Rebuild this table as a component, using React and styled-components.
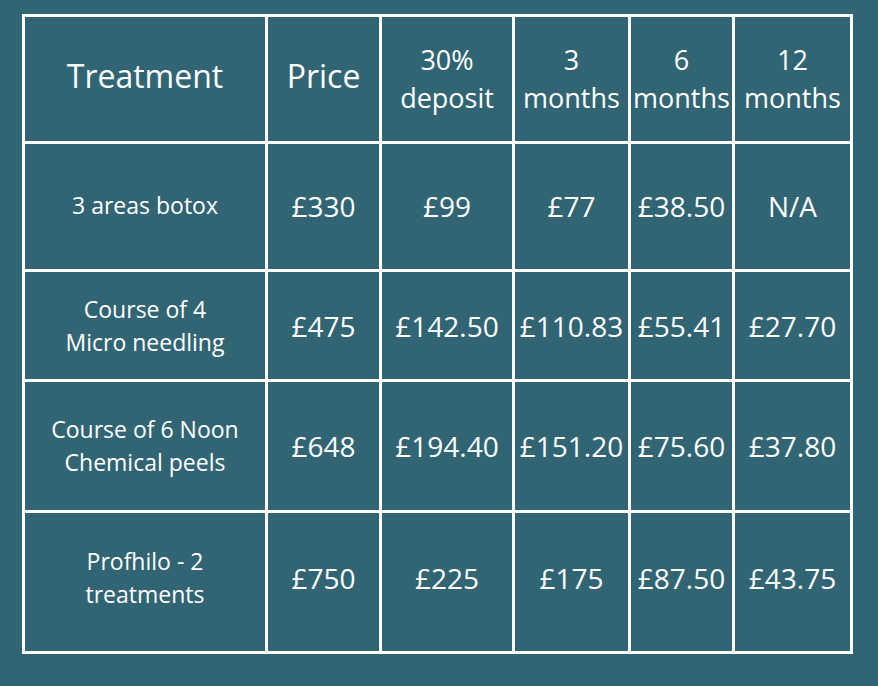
import React from 'react';
import styled, { createGlobalStyle } from 'styled-components';

const GlobalStyle = createGlobalStyle`
  html, body {
    margin: 0;
    padding: 0;
    background: #316574;
  }
  body {
    font-family: "Open Sans", "Liberation Sans", sans-serif;
    color: #ffffff;
  }
`;

const Page = styled.div`
  width: 878px;
  height: 686px;
  padding: 14px 0 0 22px;
  box-sizing: border-box;
  background: #316574;
`;

const Grid = styled.div`
  display: grid;
  grid-template-columns: 240px 111px 130px 113px 101px 115px;
  grid-template-rows: 124px 125px 107px 128px 138px;
  gap: 3px;
  padding: 3px;
  width: max-content;
  background: #ffffff;
`;

const sizes = {
  title: { font: '32px', line: '40px' },
  head: { font: '27px', line: '38px' },
  name: { font: '23px', line: '33px' },
  value: { font: '28px', line: '34px' },
};

// lift = how far the text sits above the cell's centre
const Cell = styled.div`
  background: #316574;
  display: flex;
  align-items: center;
  justify-content: center;
  text-align: center;
  white-space: pre-line;
  box-sizing: border-box;
  padding-bottom: ${p => p.lift * 2}px;
  font-size: ${p => sizes[p.kind].font};
  line-height: ${p => sizes[p.kind].line};
  font-weight: 400;
`;

const head = [
  ['Treatment', 'title'],
  ['Price', 'title'],
  ['30%\ndeposit', 'head'],
  ['3\nmonths', 'head'],
  ['6\nmonths', 'head'],
  ['12\nmonths', 'head'],
];

const rows = [
  { lift: 1, cells: ['3 areas botox', '£330', '£99', '£77', '£38.50', 'N/A'] },
  { lift: 0, cells: ['Course of 4\nMicro needling', '£475', '£142.50', '£110.83', '£55.41', '£27.70'] },
  { lift: 0, cells: ['Course of 6 Noon\nChemical peels', '£648', '£194.40', '£151.20', '£75.60', '£37.80'] },
  { lift: 4, cells: ['Profhilo - 2\ntreatments', '£750', '£225', '£175', '£87.50', '£43.75'] },
];

export default function App() {
  return (
    <>
      <GlobalStyle />
      <Page>
        <Grid>
          {head.map(([text, kind]) => (
            <Cell key={text} kind={kind} lift={kind === 'title' ? 3 : 0}>{text}</Cell>
          ))}
          {rows.map(r =>
            r.cells.map((v, i) => (
              <Cell key={r.cells[0] + i} kind={i === 0 ? 'name' : 'value'} lift={r.lift}>{v}</Cell>
            ))
          )}
        </Grid>
      </Page>
    </>
  );
}
